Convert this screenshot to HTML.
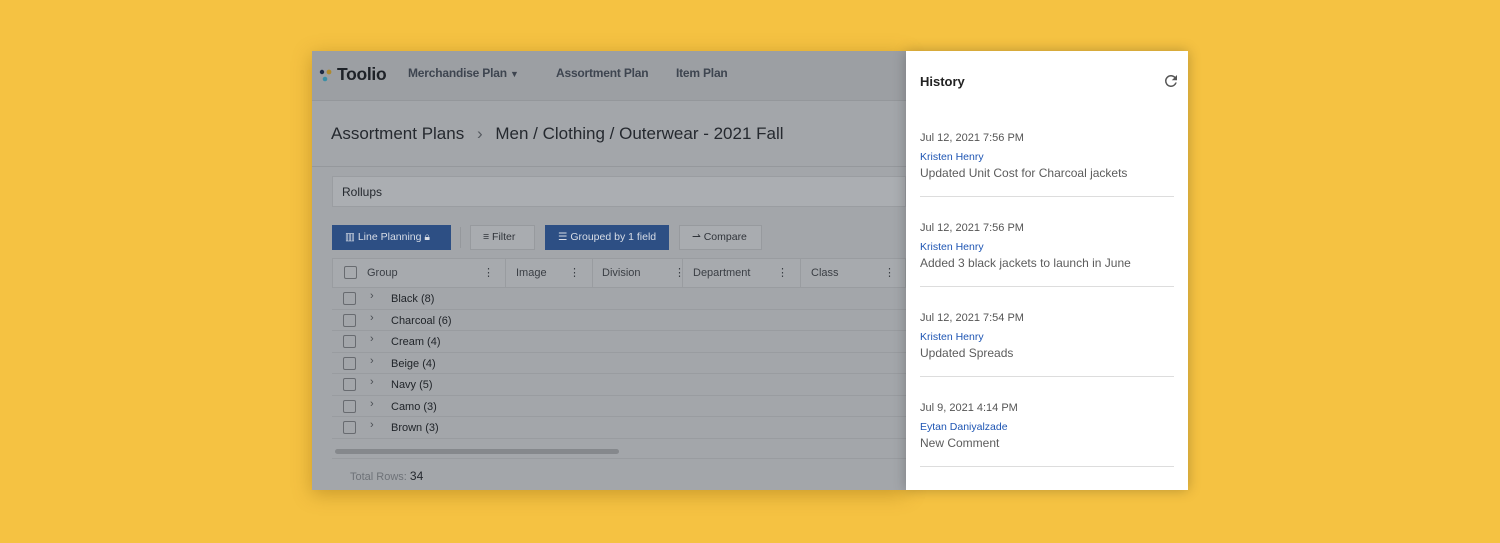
<!DOCTYPE html>
<html><head><style>
*{margin:0;padding:0;box-sizing:border-box}
body{width:1500px;height:543px;background:#f5c242;font-family:"Liberation Sans",sans-serif;position:relative;overflow:hidden}
.app{position:absolute;left:312px;top:51px;width:594px;height:439px;background:#a3a6aa;overflow:hidden;box-shadow:0 4px 18px rgba(120,80,0,.35)}
.hdr{position:absolute;left:0;top:0;width:594px;height:50px;background:#9c9fa3;border-bottom:1px solid #94979b}
.a{position:absolute;white-space:nowrap}
.btn{position:absolute;top:174px;height:25px;border:1px solid #979a9e;background:#a9acb0;font-size:10.5px;color:#30343a;line-height:23px;padding-left:12px}
.blue{background:#2d4f84;border-color:#2d4f84;color:#d8dde6}
.row{position:absolute;left:20px;width:574px;height:21.5px;border-bottom:1px solid #999ca0;font-size:11px;color:#1f2328}
.cb{position:absolute;left:11px;top:4px;width:13px;height:13px;border:1.3px solid #686b70;border-radius:2px}
.panel{position:absolute;left:906px;top:51px;width:282px;height:439px;background:#fff;box-shadow:0 0 12px rgba(0,0,0,.25)}
.it{position:absolute;left:14px;width:254px;height:90px;border-bottom:1px solid #ddd}
.d{position:absolute;top:25px;font-size:11px;color:#555}
.n{position:absolute;top:44px;font-size:10.5px;color:#1e55b3}
.m{position:absolute;top:59px;font-size:12px;color:#5c5c5c}
.nav{font-size:12px;color:#3e4550;font-weight:bold;letter-spacing:-0.2px}
</style></head><body>
<div class="app">
 <div class="hdr">
  <div class="a" style="left:7px;top:17px"><svg width="14" height="14"><circle cx="3" cy="4" r="2.2" fill="#1e2a44"/><circle cx="10" cy="4" r="2.4" fill="#b08a2c"/><circle cx="6" cy="11" r="2.3" fill="#3b8fa6"/></svg></div>
  <div class="a" style="left:25px;top:13px;font-size:17.5px;color:#1e2228;font-weight:bold;letter-spacing:-0.3px">Toolio</div>
  <div class="a nav" style="left:96px;top:15px">Merchandise Plan <span style="font-size:9px">▼</span></div>
  <div class="a nav" style="left:244px;top:15px">Assortment Plan</div>
  <div class="a nav" style="left:364px;top:15px">Item Plan</div>
 </div>
 <div class="a" style="left:0;top:115px;width:594px;height:1px;background:#95989c"></div>
 <div class="a" style="left:19px;top:73px;font-size:17px;color:#25292f">Assortment Plans <span style="color:#55595f;margin:0 8px">›</span> Men / Clothing / Outerwear - 2021 Fall</div>
 <div class="a" style="left:20px;top:125px;width:574px;height:31px;background:#abaeb2;border:1px solid #9a9da1;font-size:12px;color:#25292f;padding:8px 9px">Rollups</div>
 <div class="btn blue" style="left:20px;width:119px">▥ Line Planning 🔒︎</div>
 <div class="a" style="left:148px;top:176px;width:1px;height:21px;background:#95989c"></div>
 <div class="btn" style="left:158px;width:65px">≡ Filter</div>
 <div class="btn blue" style="left:233px;width:124px">☰ Grouped by 1 field</div>
 <div class="btn" style="left:367px;width:83px">⇀ Compare</div>
 <div class="a" style="left:20px;top:207px;width:574px;height:30px;background:#a7aaae;border:1px solid #999ca0;font-size:11px;color:#3a3e44">
  <div class="cb" style="top:7px"></div>
  <span class="a" style="left:34px;top:8px">Group</span><span class="a" style="left:150px;top:7px">⋮</span>
  <div class="a" style="left:172px;top:0;width:1px;height:29px;background:#999ca0"></div>
  <span class="a" style="left:183px;top:8px">Image</span><span class="a" style="left:236px;top:7px">⋮</span>
  <div class="a" style="left:259px;top:0;width:1px;height:29px;background:#999ca0"></div>
  <span class="a" style="left:269px;top:8px">Division</span><span class="a" style="left:341px;top:7px">⋮</span>
  <div class="a" style="left:349px;top:0;width:1px;height:29px;background:#999ca0"></div>
  <span class="a" style="left:360px;top:8px">Department</span><span class="a" style="left:444px;top:7px">⋮</span>
  <div class="a" style="left:467px;top:0;width:1px;height:29px;background:#999ca0"></div>
  <span class="a" style="left:478px;top:8px">Class</span><span class="a" style="left:551px;top:7px">⋮</span>
 </div>
 <div class="row" style="top:237px"><div class="cb"></div><span class="a" style="left:38px;top:2px;color:#4a4e54">›</span><span class="a" style="left:59px;top:5px">Black (8)</span></div>
 <div class="row" style="top:258.5px"><div class="cb"></div><span class="a" style="left:38px;top:2px;color:#4a4e54">›</span><span class="a" style="left:59px;top:5px">Charcoal (6)</span></div>
 <div class="row" style="top:280px"><div class="cb"></div><span class="a" style="left:38px;top:2px;color:#4a4e54">›</span><span class="a" style="left:59px;top:5px">Cream (4)</span></div>
 <div class="row" style="top:301.5px"><div class="cb"></div><span class="a" style="left:38px;top:2px;color:#4a4e54">›</span><span class="a" style="left:59px;top:5px">Beige (4)</span></div>
 <div class="row" style="top:323px"><div class="cb"></div><span class="a" style="left:38px;top:2px;color:#4a4e54">›</span><span class="a" style="left:59px;top:5px">Navy (5)</span></div>
 <div class="row" style="top:344.5px"><div class="cb"></div><span class="a" style="left:38px;top:2px;color:#4a4e54">›</span><span class="a" style="left:59px;top:5px">Camo (3)</span></div>
 <div class="row" style="top:366px"><div class="cb"></div><span class="a" style="left:38px;top:2px;color:#4a4e54">›</span><span class="a" style="left:59px;top:5px">Brown (3)</span></div>
 <div class="a" style="left:23px;top:398px;width:284px;height:5px;border-radius:3px;background:#85888c"></div>
 <div class="a" style="left:20px;top:407px;width:574px;height:1px;background:#999ca0"></div>
 <div class="a" style="left:38px;top:418px;font-size:11px;color:#6e7278">Total Rows: <span style="color:#25292f;font-size:12px">34</span></div>
</div>
<div class="panel">
 <div class="a" style="left:14px;top:23px;font-size:13px;font-weight:bold;color:#222">History</div>
 <svg class="a" style="left:256px;top:21px" width="18" height="18" viewBox="0 0 24 24"><path d="M17.65 6.35A7.95 7.95 0 0 0 12 4a8 8 0 1 0 7.73 10h-2.08A6 6 0 1 1 12 6c1.66 0 3.140.69 4.22 1.78L13 11h7V4l-2.35 2.35z" fill="#555"/></svg>
 <div class="it" style="top:56px"><div class="d">Jul 12, 2021 7:56 PM</div><div class="n">Kristen Henry</div><div class="m">Updated Unit Cost for Charcoal jackets</div></div>
 <div class="it" style="top:146px"><div class="d">Jul 12, 2021 7:56 PM</div><div class="n">Kristen Henry</div><div class="m">Added 3 black jackets to launch in June</div></div>
 <div class="it" style="top:236px"><div class="d">Jul 12, 2021 7:54 PM</div><div class="n">Kristen Henry</div><div class="m">Updated Spreads</div></div>
 <div class="it" style="top:326px"><div class="d">Jul 9, 2021 4:14 PM</div><div class="n">Eytan Daniyalzade</div><div class="m">New Comment</div></div>
</div>
</body></html>
